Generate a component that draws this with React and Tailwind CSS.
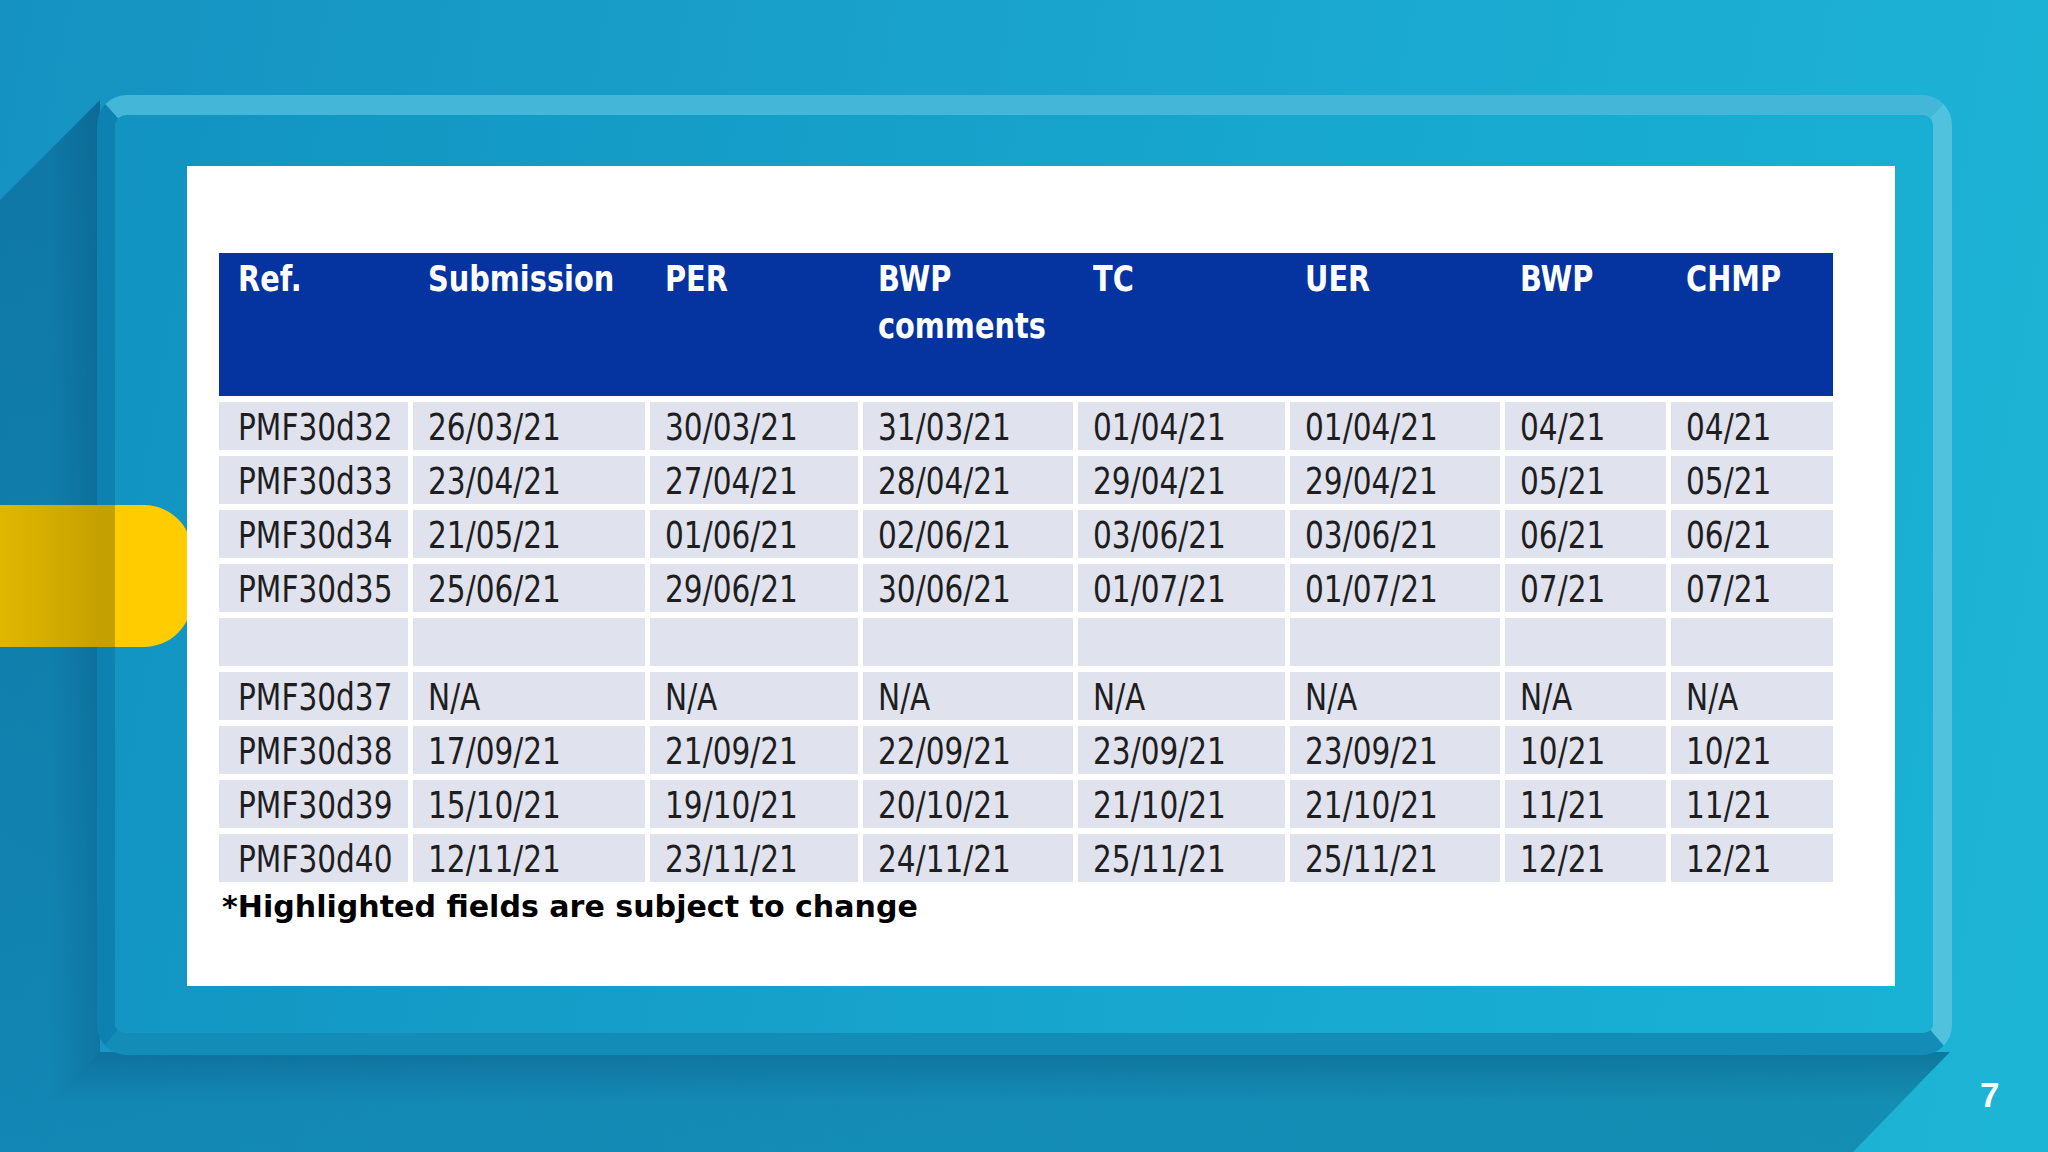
import React from "react";

const headers = [["Ref."], ["Submission"], ["PER"], ["BWP", "comments"], ["TC"], ["UER"], ["BWP"], ["CHMP"]];

const rows = [
  ["PMF30d32", "26/03/21", "30/03/21", "31/03/21", "01/04/21", "01/04/21", "04/21", "04/21"],
  ["PMF30d33", "23/04/21", "27/04/21", "28/04/21", "29/04/21", "29/04/21", "05/21", "05/21"],
  ["PMF30d34", "21/05/21", "01/06/21", "02/06/21", "03/06/21", "03/06/21", "06/21", "06/21"],
  ["PMF30d35", "25/06/21", "29/06/21", "30/06/21", "01/07/21", "01/07/21", "07/21", "07/21"],
  ["", "", "", "", "", "", "", ""],
  ["PMF30d37", "N/A", "N/A", "N/A", "N/A", "N/A", "N/A", "N/A"],
  ["PMF30d38", "17/09/21", "21/09/21", "22/09/21", "23/09/21", "23/09/21", "10/21", "10/21"],
  ["PMF30d39", "15/10/21", "19/10/21", "20/10/21", "21/10/21", "21/10/21", "11/21", "11/21"],
  ["PMF30d40", "12/11/21", "23/11/21", "24/11/21", "25/11/21", "25/11/21", "12/21", "12/21"],
];

const cols = "grid grid-cols-[189px_232px_208px_210px_207px_210px_161px_162px] gap-x-[5px]";

function Shadow() {
  return (
    <svg className="absolute left-0 top-0 z-0" width="2048" height="1152" viewBox="0 0 2048 1152">
      <defs>
        <linearGradient id="sh" x1="1" y1="0" x2="0" y2="1">
          <stop offset="0" stopColor="#003a66" stopOpacity="0.38" />
          <stop offset="0.55" stopColor="#003a66" stopOpacity="0.3" />
          <stop offset="1" stopColor="#003a66" stopOpacity="0.16" />
        </linearGradient>
        <linearGradient id="shb" x1="0" y1="0" x2="0" y2="1">
          <stop offset="0" stopColor="#002a50" stopOpacity="0.22" />
          <stop offset="1" stopColor="#002a50" stopOpacity="0" />
        </linearGradient>
        <linearGradient id="shl" x1="1" y1="0" x2="0" y2="0">
          <stop offset="0" stopColor="#002a50" stopOpacity="0.18" />
          <stop offset="1" stopColor="#002a50" stopOpacity="0" />
        </linearGradient>
      </defs>
      <polygon points="100,100 0,200 0,1152 1853,1152 1950,1052 100,1052" fill="url(#sh)" />
      <polygon points="100,1052 1950,1052 1900,1102 50,1102" fill="url(#shb)" />
      <polygon points="100,100 100,1052 50,1102 50,150" fill="url(#shl)" />
    </svg>
  );
}

export default function App() {
  return (
    <div className="relative w-[2048px] h-[1152px] overflow-hidden bg-[linear-gradient(100deg,#1592c1_0%,#1aa7cf_55%,#1db5d6_100%)] pl-[97px] pt-[95px] font-['DejaVu_Sans',sans-serif]">
      <Shadow />

      {/* frame */}
      <div className="relative w-[1855px] h-[960px] rounded-[30px] border-t-[20px] border-l-[18px] border-r-[19px] border-b-[22px] border-t-[#44b6d7] border-l-[#0d82b1] border-r-[#50c2dd] border-b-[#138cb8] bg-[linear-gradient(100deg,#1293c1_0%,#17a7cf_60%,#19b1d4_100%)] pl-[72px] pt-[51px]">
        <div className="relative z-20 w-[1708px] h-[820px] bg-white pl-[32px] pt-[87px]">
          <div className="flex flex-col gap-y-[6px] w-[1614px]">
            <div className={`${cols} h-[143px] bg-[#0533a0]`}>
              {headers.map((h, i) => (
                <div key={i} className={`${i === 0 ? "pl-[19px]" : "pl-[15px]"} pt-[2px] text-white font-bold text-[36px] leading-[47px] whitespace-nowrap`}>
                  {h.map((line, j) => (
                    <div key={j} className="origin-left scale-x-[0.8]">{line}</div>
                  ))}
                </div>
              ))}
            </div>
            {rows.map((r, ri) => (
              <div key={ri} className={`${cols} h-[48px] overflow-hidden`}>
                {r.map((c, ci) => (
                  <div key={ci} className={`h-[48px] bg-[#e0e2ee] flex items-center ${ci === 0 ? "pl-[19px]" : "pl-[15px]"} text-[#1e1e1e] text-[37px] leading-none whitespace-nowrap`}>
                    <span className="inline-block origin-left scale-x-[0.8] pt-[2px]">{c}</span>
                  </div>
                ))}
              </div>
            ))}
          </div>
          <div className="mt-[6px] pl-[3px] text-black font-bold text-[31px] leading-[36px] whitespace-nowrap">
            <span className="inline-block origin-left scale-x-[0.97]">*Highlighted fields are subject to change</span>
          </div>
        </div>
      </div>

      {/* yellow tab */}
      <div className="absolute left-0 top-[505px] z-10 w-[192px] h-[142px] rounded-r-[48px] bg-[linear-gradient(90deg,#e0b700_0px,#d1aa00_60px,#c6a100_97px,#c4a000_97px,#c4a000_115px,#ffcc00_115px)]" />

      {/* page number */}
      <div className="absolute left-[1980px] top-[1077px] z-10 text-white font-bold text-[35px] leading-[35px] font-['Liberation_Sans',sans-serif]">7</div>
    </div>
  );
}
